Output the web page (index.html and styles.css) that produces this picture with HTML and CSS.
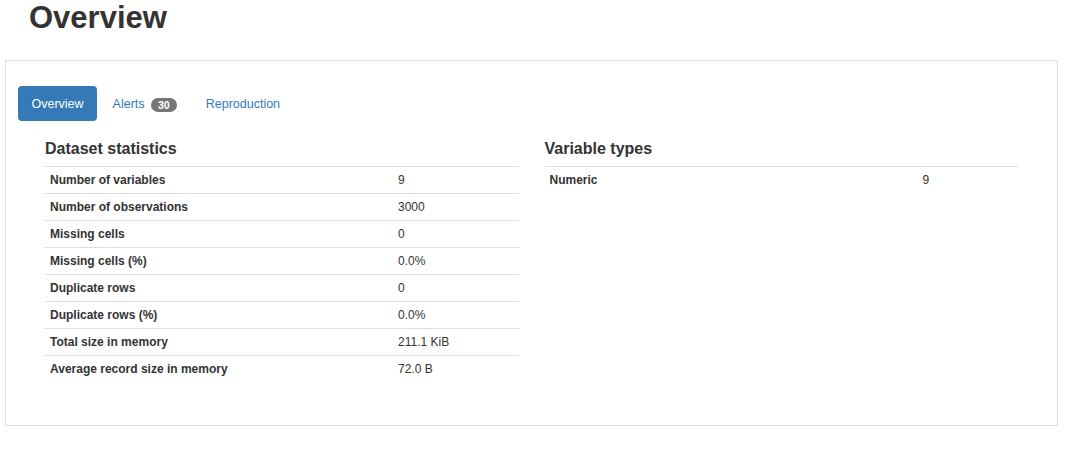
FILE: index.html
```html
<!DOCTYPE html>
<html lang="en">
<head>
    <meta charset="UTF-8">
    <meta name="viewport" content="width=device-width, initial-scale=1.0">
    <title>Overview</title>
    <link rel="stylesheet" href="styles.css">
</head>
<body>
    <div class="page">
        <h1 class="page-title">Overview</h1>
        <div class="panel">
            <ul class="tabs">
                <li><a class="tab tab--active" href="#overview">Overview</a></li>
                <li><a class="tab" href="#alerts">Alerts <span class="badge">30</span></a></li>
                <li><a class="tab" href="#reproduction">Reproduction</a></li>
            </ul>
            <div class="tab-content">
                <div class="col">
                    <h2 class="section-title">Dataset statistics</h2>
                    <table class="stats stats--dataset">
                        <tr><th>Number of variables</th><td>9</td></tr>
                        <tr><th>Number of observations</th><td>3000</td></tr>
                        <tr><th>Missing cells</th><td>0</td></tr>
                        <tr><th>Missing cells (%)</th><td>0.0%</td></tr>
                        <tr><th>Duplicate rows</th><td>0</td></tr>
                        <tr><th>Duplicate rows (%)</th><td>0.0%</td></tr>
                        <tr><th>Total size in memory</th><td>211.1 KiB</td></tr>
                        <tr><th>Average record size in memory</th><td>72.0 B</td></tr>
                    </table>
                </div>
                <div class="col">
                    <h2 class="section-title">Variable types</h2>
                    <table class="stats stats--types">
                        <tr><th>Numeric</th><td>9</td></tr>
                    </table>
                </div>
            </div>
        </div>
    </div>
</body>
</html>
```

FILE: styles.css
```css
* {
    box-sizing: border-box;
}

body {
    margin: 0;
    background-color: #fff;
    color: #333;
    font-family: 'Liberation Sans', Arial, sans-serif;
    font-size: 12px;
    line-height: 17px;
}

.page {
    padding-left: 5px;
    width: 1058px;
}

.page-title {
    margin: 1px 0 25px 24px;
    font-size: 31px;
    font-weight: bold;
    line-height: 34px;
}

.panel {
    border: 1px solid #ddd;
    padding: 25px 12px 23px;
}

.tabs {
    display: flex;
    gap: 2px;
    margin: 0;
    padding: 0;
    list-style: none;
}

.tab {
    display: block;
    padding: 10px 13.5px 8px;
    border-radius: 4px;
    color: #337ab7;
    text-decoration: none;
    font-size: 12.5px;
    line-height: 17px;
}

.tab--active {
    background-color: #337ab7;
    color: #fff;
}

.badge {
    display: inline-block;
    margin-left: 3px;
    padding: 2px 7px;
    border-radius: 10px;
    background-color: #777;
    color: #fff;
    font-size: 10.5px;
    font-weight: bold;
    line-height: 10px;
    vertical-align: -1px;
}

.tab-content {
    display: grid;
    grid-template-columns: 1fr 1fr;
    gap: 26px;
    padding: 19px 27px 0;
}

.section-title {
    margin: 0 0 8px;
    font-size: 16px;
    font-weight: bold;
    line-height: 18px;
}

.stats {
    width: 100%;
    border-collapse: collapse;
    margin-bottom: 20px;
    line-height: 16px;
}

.stats th,
.stats td {
    padding: 5px;
    border-top: 1px solid #ddd;
    text-align: left;
    vertical-align: top;
}

.stats th {
    font-weight: bold;
}

.stats--dataset th {
    width: 348px;
}

.stats--types th {
    width: 373px;
}
```
